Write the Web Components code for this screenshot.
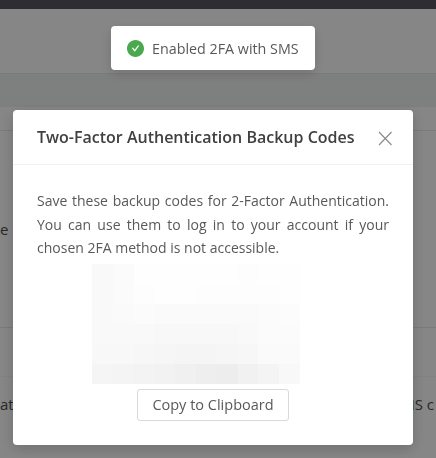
<!DOCTYPE html>
<html lang="en">
<head>
<meta charset="utf-8">
<title>Backup Codes</title>
<style>
html, body { margin: 0; height: 100%; overflow: hidden; }
body { font-family: "Open Sans", "Liberation Sans", sans-serif; background: #f4f4f4; color: #333; }
</style>
</head>
<body>
<settings-page>
  <page-row height="64" line="yes"></page-row>
  <page-row height="32" tint="#e6e7e8"></page-row>
  <page-row height="23" line="yes"></page-row>
  <page-row height="196" line="yes" left="e"></page-row>
  <page-row height="48" line="soft"></page-row>
  <page-row height="54" left="at" right="MS c"></page-row>
</settings-page>

<modal-mask>
  <toast-message slot="toast">Enabled 2FA with SMS</toast-message>
  <backup-dialog heading="Two-Factor Authentication Backup Codes">
    Save these backup codes for 2-Factor Authentication. You can use them to log in to your account if your chosen 2FA method is not accessible.
  </backup-dialog>
</modal-mask>

<script>
// background page, dimmed by the mask on top
class SettingsPage extends HTMLElement {
  constructor() {
    super();
    this.attachShadow({ mode: "open" });
    this.shadowRoot.innerHTML = `
      <style>
        :host { display: flex; flex-direction: column; height: 100%; }
        .bar { height: 9px; background: #54545c; flex: none; }
      </style>
      <div class="bar"></div>
      <slot></slot>`;
  }
}
customElements.define("settings-page", SettingsPage);

class PageRow extends HTMLElement {
  constructor() {
    super();
    this.attachShadow({ mode: "open" });
  }
  connectedCallback() {
    const line = this.getAttribute("line");
    const border = line === "yes" ? "#dfdfdf" : line === "soft" ? "#ececec" : "transparent";
    this.shadowRoot.innerHTML = `
      <style>
        :host {
          display: flex;
          flex: none;
          align-items: center;
          justify-content: space-between;
          height: ${this.getAttribute("height")}px;
          background: ${this.getAttribute("tint") || "transparent"};
          border-bottom: 1px solid ${border};
          padding-right: 2px;
          font-size: 15px;
          color: #4a4a4a;
          white-space: nowrap;
        }
      </style>
      <span>${this.getAttribute("left") || ""}</span>
      <span>${this.getAttribute("right") || ""}</span>`;
  }
}
customElements.define("page-row", PageRow);

class ModalMask extends HTMLElement {
  constructor() {
    super();
    this.attachShadow({ mode: "open" });
    this.shadowRoot.innerHTML = `
      <style>
        :host {
          position: fixed;
          inset: 0;
          display: flex;
          flex-direction: column;
          align-items: center;
          box-sizing: border-box;
          padding: 26px 10px 0 0;
          background: rgba(0, 0, 0, .45);
        }
        .stack { display: flex; flex-direction: column; align-items: center; gap: 40px; }
      </style>
      <div class="stack">
        <slot name="toast"></slot>
        <slot></slot>
      </div>`;
  }
}
customElements.define("modal-mask", ModalMask);

const toastTemplate = document.createElement("template");
toastTemplate.innerHTML = `
  <style>
    :host {
      display: flex;
      align-items: center;
      gap: 8px;
      box-sizing: border-box;
      width: 204px;
      height: 44px;
      padding-left: 16px;
      background: #fff;
      border-radius: 4px;
      box-shadow: 0 4px 12px rgba(0, 0, 0, .15);
      font-size: 14.3px;
      color: #595959;
      white-space: nowrap;
    }
    svg { width: 17px; height: 17px; fill: #4aa84f; flex: none; }
  </style>
  <svg viewBox="64 64 896 896"><path d="M512 64C264.6 64 64 264.6 64 512s200.6 448 448 448 448-200.6 448-448S759.4 64 512 64zm193.5 301.7l-210.6 292a31.8 31.8 0 0 1-51.7 0L318.5 484.9c-3.8-5.3 0-12.7 6.5-12.7h46.9c10.2 0 19.9 4.9 25.9 13.3l71.2 98.8 157.2-218c6-8.3 15.6-13.3 25.9-13.3H699c6.5 0 10.3 7.4 6.5 12.7z"/></svg>
  <slot></slot>`;

class ToastMessage extends HTMLElement {
  constructor() {
    super();
    this.attachShadow({ mode: "open" });
    this.shadowRoot.appendChild(toastTemplate.content.cloneNode(true));
  }
}
customElements.define("toast-message", ToastMessage);

// the blurred-out codes, one row per line of the mosaic
const mosaic = [
  "f8f9f8 fbfbfb fefefe fefefe fefefe fefefe fefefe fdfdfd fefefe fefefe",
  "f8f9f8 fbfbfb fdfdfd fefefe fefefe fdfdfd fdfdfd fdfdfd fdfdfd fefefe",
  "f9f9f9 fafafa fbfbfb fafafa fafafa fafafa fafafa fafafa fbfbfb fcfcfc",
  "f9f9f9 f9f9f9 f9f9f9 f8f8f8 f8f8f8 f8f8f8 f8f8f8 f9f9f9 fbfbfb fbfbfb",
  "f8f8f8 f8f8f8 f7f7f7 f6f6f6 f5f5f5 f5f5f5 f6f6f6 f7f7f7 fafafa fafafa",
  "f5f5f5 f4f4f4 f3f3f3 f2f2f2 f0f0f0 eeeeee ededed f1f1f1 f4f4f4 f8f8f8"
];

class CodeMosaic extends HTMLElement {
  constructor() {
    super();
    this.attachShadow({ mode: "open" });
    const cells = mosaic.flatMap((row) => row.split(" "))
      .map((c) => `<i style="background:#${c}"></i>`).join("");
    this.shadowRoot.innerHTML = `
      <style>
        :host {
          display: grid;
          grid-template-columns: repeat(10, 1fr);
          grid-template-rows: repeat(6, 1fr);
          width: 208px;
          height: 120px;
          align-self: flex-start;
          margin-left: 55px;
        }
      </style>
      ${cells}`;
  }
}
customElements.define("code-mosaic", CodeMosaic);

class BackupDialog extends HTMLElement {
  constructor() {
    super();
    this.attachShadow({ mode: "open" });
  }
  connectedCallback() {
    this.shadowRoot.innerHTML = `
      <style>
        :host {
          display: block;
          width: 400px;
          height: 335px;
          background: #fff;
          border-radius: 4px;
          box-shadow: 0 4px 14px rgba(0, 0, 0, .18);
          color: #595959;
        }
        header {
          display: flex;
          align-items: center;
          justify-content: space-between;
          box-sizing: border-box;
          height: 55px;
          padding: 0 20px 0 24px;
          border-bottom: 1px solid #f0f0f0;
        }
        h2 { margin: 0; font-size: 16px; font-weight: 600; color: #404040; white-space: nowrap; }
        svg { width: 16px; height: 16px; margin-top: 2px; stroke: #8c8c8c; stroke-width: 1.2; fill: none; flex: none; }
        main {
          display: flex;
          flex-direction: column;
          align-items: center;
          padding: 24px 24px 0;
        }
        p { margin: 0 0 4px; font-size: 14px; line-height: 23.5px; text-align: justify; align-self: stretch; }
        button {
          width: 152px;
          height: 32px;
          margin-top: 5px;
          padding: 0;
          background: #fff;
          border: 1px solid #d9d9d9;
          border-radius: 3px;
          font: 14.5px "Open Sans", "Liberation Sans", sans-serif;
          color: #595959;
        }
      </style>
      <header>
        <h2>${this.getAttribute("heading")}</h2>
        <svg viewBox="0 0 16 16"><path d="M2 2l12.5 13M14.5 2L2 15"/></svg>
      </header>
      <main>
        <p><slot></slot></p>
        <code-mosaic></code-mosaic>
        <button>Copy to Clipboard</button>
      </main>`;
  }
}
customElements.define("backup-dialog", BackupDialog);
</script>
</body>
</html>
